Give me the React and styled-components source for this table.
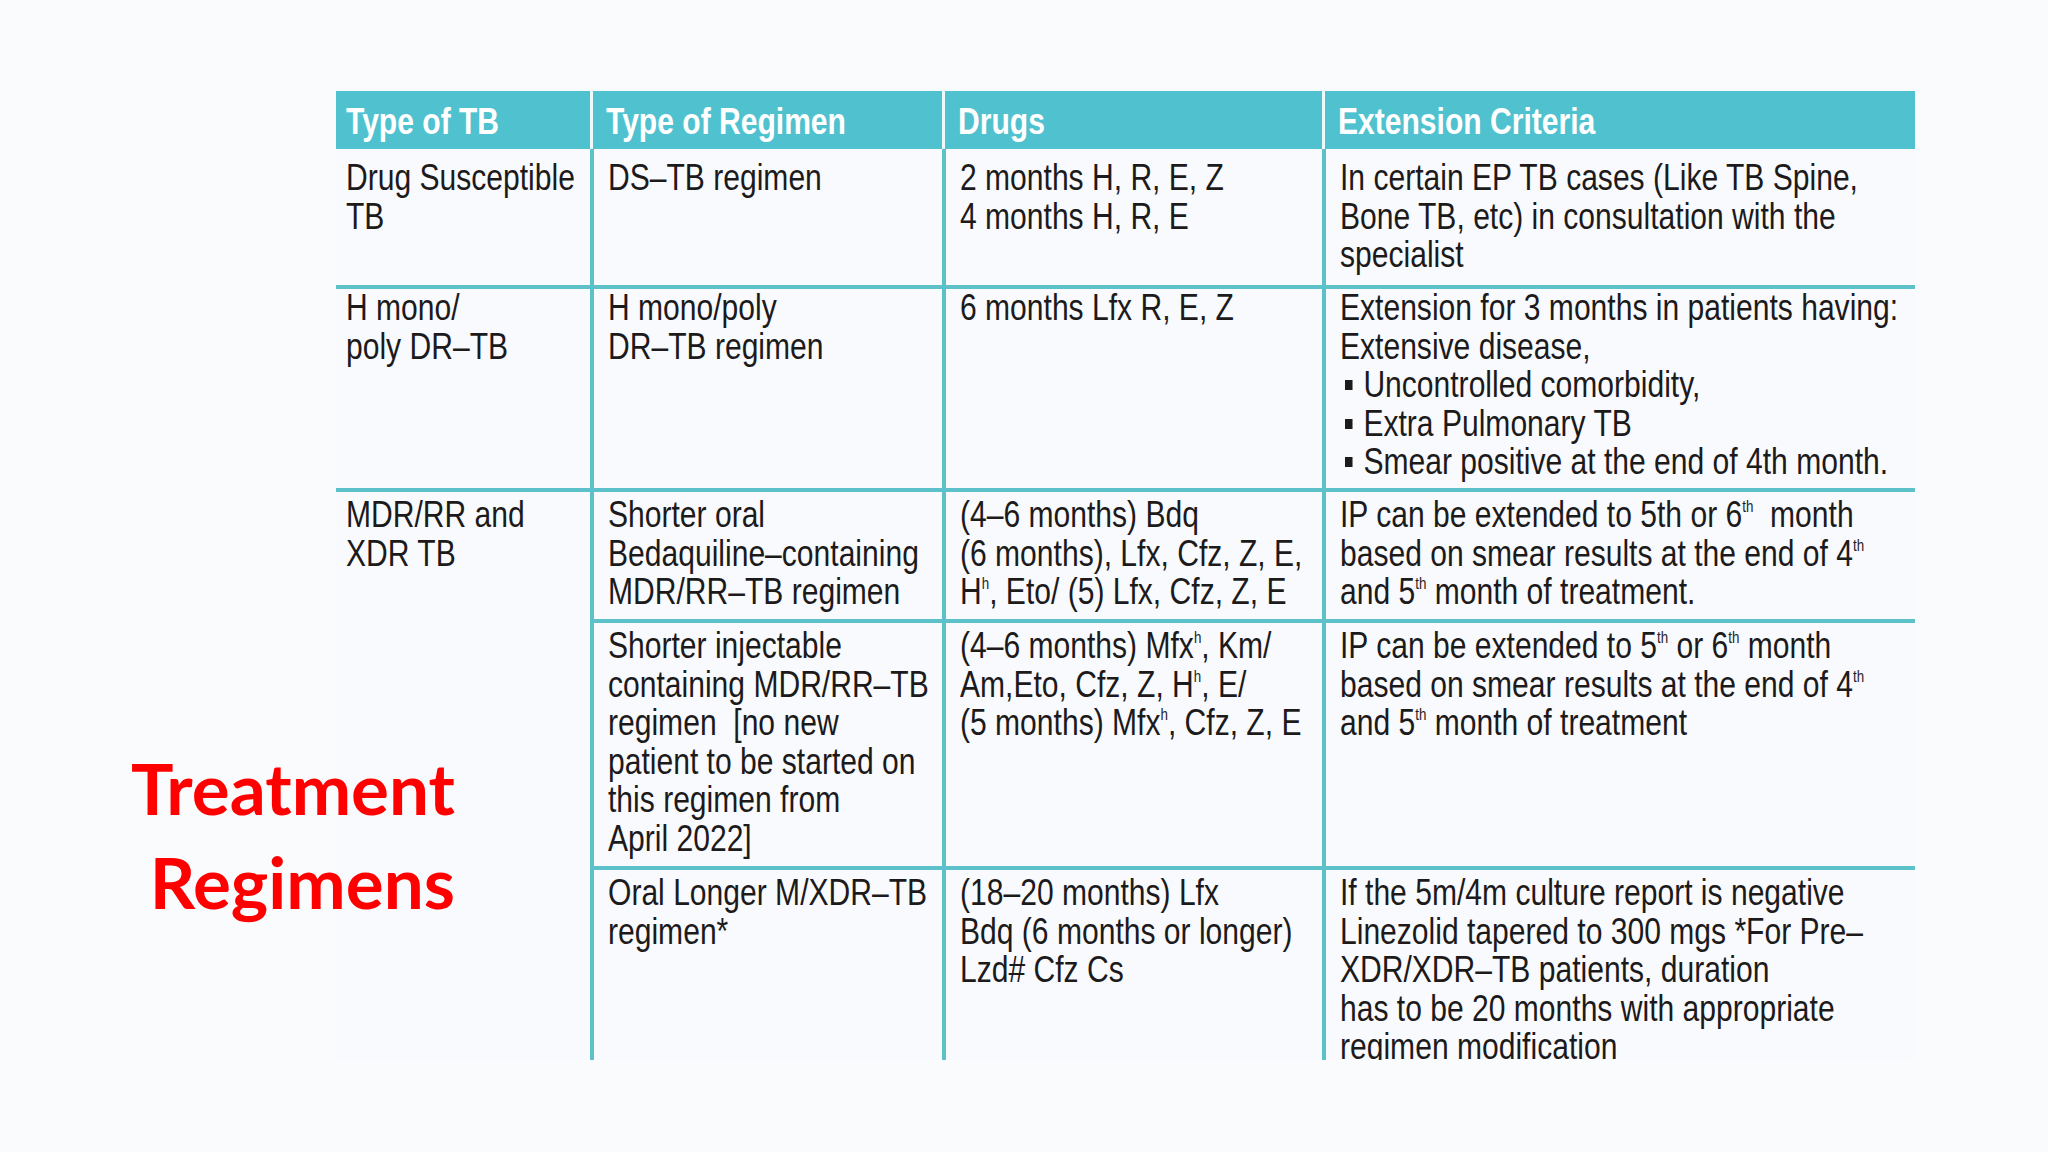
import React from "react";
import styled, { createGlobalStyle } from "styled-components";

const GlobalStyle = createGlobalStyle`
  html, body {
    margin: 0;
    padding: 0;
    background: #fafbfd;
  }
`;

const Slide = styled.div`
  position: relative;
  width: 2048px;
  height: 1152px;
  box-sizing: border-box;
  padding: 91px 0 0 336px;
  overflow: hidden;
  background: #fafbfd;
`;

const Title = styled.h1`
  position: absolute;
  left: 55px;
  top: 741px;
  width: 400px;
  margin: 0;
  text-align: right;
  font-family: Lato, "Open Sans", sans-serif;
  font-weight: 700;
  font-size: 71px;
  line-height: 94px;
  color: #ff0000;
`;

const Table = styled.div`
  display: grid;
  grid-template-columns: 254px 352px 380px 593px;
  grid-template-rows: 58px 136px 203px 131px 247px 194px;
  width: 1579px;
  background: #f8fafd;
  font-family: "Liberation Sans", Arial, sans-serif;
  font-size: 36px;
  line-height: 38.5px;
  color: #1d1a1b;
`;

/* the print table uses a condensed grotesque; squeeze Arial metrics the same way Arial Narrow does */
const Condensed = styled.div`
  width: 120%;
  transform: scaleX(0.835);
  transform-origin: 0 0;
  white-space: nowrap;
`;

const HeadCell = styled.div`
  box-sizing: border-box;
  overflow: hidden;
  background: #50c2cf;
  color: #ffffff;
  font-weight: 700;
  padding: 12px 0 0 ${(p) => (p.$first ? 10 : 13)}px;
  border-left: ${(p) => (p.$first ? "none" : "3px solid rgba(255,255,255,0.9)")};
`;

const Cell = styled.div`
  box-sizing: border-box;
  overflow: hidden;
  grid-row: ${(p) => (p.$span ? `span ${p.$span}` : "auto")};
  padding: ${(p) => p.$pad}px 0 0 ${(p) => (p.$col === 0 ? 10 : 14)}px;
  border-left: ${(p) => (p.$col === 0 ? "none" : "4px solid #5cc1c8")};
  border-top: ${(p) => (p.$first ? "none" : "4px solid #5cc1c8")};
`;

const Sup = styled.sup`
  font-size: 16px;
  line-height: 1;
  vertical-align: top;
  position: relative;
  top: 3px;
`;

const Bullets = styled.ul`
  list-style: none;
  margin: 0;
  padding: 0;
`;

const Bullet = styled.li`
  &::before {
    content: "";
    display: inline-block;
    width: 9px;
    height: 10px;
    margin: 0 13px 0 6px;
    background: #1d1a1b;
    vertical-align: 7px;
  }
`;

const headers = ["Type of TB", "Type of Regimen", "Drugs", "Extension Criteria"];

function TCell({ col, first, span, pad = 4, children }) {
  return (
    <Cell $col={col} $first={first} $span={span} $pad={first ? 10 : pad}>
      <Condensed>{children}</Condensed>
    </Cell>
  );
}

export default function App() {
  return (
    <>
      <GlobalStyle />
      <Slide>
        <Table>
          {headers.map((h, i) => (
            <HeadCell key={h} $first={i === 0}>
              <Condensed>{h}</Condensed>
            </HeadCell>
          ))}

          <TCell col={0} first>
            Drug Susceptible
            <br />
            TB
          </TCell>
          <TCell col={1} first>
            DS–TB regimen
          </TCell>
          <TCell col={2} first>
            2 months H, R, E, Z
            <br />4 months H, R, E
          </TCell>
          <TCell col={3} first>
            In certain EP TB cases (Like TB Spine,
            <br />
            Bone TB, etc) in consultation with the
            <br />
            specialist
          </TCell>

          <TCell col={0} pad={0}>
            H mono/
            <br />
            poly DR–TB
          </TCell>
          <TCell col={1} pad={0}>
            H mono/poly
            <br />
            DR–TB regimen
          </TCell>
          <TCell col={2} pad={0}>
            6 months Lfx R, E, Z
          </TCell>
          <TCell col={3} pad={0}>
            Extension for 3 months in patients having:
            <br />
            Extensive disease,
            <Bullets>
              <Bullet>Uncontrolled comorbidity,</Bullet>
              <Bullet>Extra Pulmonary TB</Bullet>
              <Bullet>Smear positive at the end of 4th month.</Bullet>
            </Bullets>
          </TCell>

          <TCell col={0} span={3}>
            MDR/RR and
            <br />
            XDR TB
          </TCell>
          <TCell col={1}>
            Shorter oral
            <br />
            Bedaquiline–containing
            <br />
            MDR/RR–TB regimen
          </TCell>
          <TCell col={2}>
            (4–6 months) Bdq
            <br />
            (6 months), Lfx, Cfz, Z, E,
            <br />
            H<Sup>h</Sup>, Eto/ (5) Lfx, Cfz, Z, E
          </TCell>
          <TCell col={3}>
            IP can be extended to 5th or 6<Sup>th</Sup>&nbsp; month
            <br />
            based on smear results at the end of 4<Sup>th</Sup>
            <br />
            and 5<Sup>th</Sup> month of treatment.
          </TCell>

          <TCell col={1}>
            Shorter injectable
            <br />
            containing MDR/RR–TB
            <br />
            regimen &nbsp;[no new
            <br />
            patient to be started on
            <br />
            this regimen from
            <br />
            April 2022]
          </TCell>
          <TCell col={2}>
            (4–6 months) Mfx<Sup>h</Sup>, Km/
            <br />
            Am,Eto, Cfz, Z, H<Sup>h</Sup>, E/
            <br />
            (5 months) Mfx<Sup>h</Sup>, Cfz, Z, E
          </TCell>
          <TCell col={3}>
            IP can be extended to 5<Sup>th</Sup> or 6<Sup>th</Sup> month
            <br />
            based on smear results at the end of 4<Sup>th</Sup>
            <br />
            and 5<Sup>th</Sup> month of treatment
          </TCell>

          <TCell col={1}>
            Oral Longer M/XDR–TB
            <br />
            regimen*
          </TCell>
          <TCell col={2}>
            (18–20 months) Lfx
            <br />
            Bdq (6 months or longer)
            <br />
            Lzd# Cfz Cs
          </TCell>
          <TCell col={3}>
            If the 5m/4m culture report is negative
            <br />
            Linezolid tapered to 300 mgs *For Pre–
            <br />
            XDR/XDR–TB patients, duration
            <br />
            has to be 20 months with appropriate
            <br />
            regimen modification
          </TCell>
        </Table>
        <Title>
          Treatment
          <br />
          Regimens
        </Title>
      </Slide>
    </>
  );
}
